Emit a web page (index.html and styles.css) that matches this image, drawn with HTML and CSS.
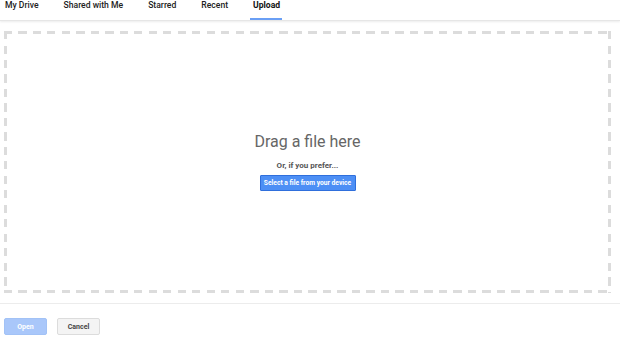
FILE: index.html
```html
<!DOCTYPE html>
<html>
<head>
<meta charset="utf-8">
<link rel="stylesheet" href="styles.css">
</head>
<body>
<div class="tabs">
  <div class="tab">My Drive</div>
  <div class="tab">Shared with Me</div>
  <div class="tab">Starred</div>
  <div class="tab">Recent</div>
  <div class="tab active">Upload</div>
</div>
<div class="main">
  <div class="drop">
    <div class="drag">Drag a file here</div>
    <div class="prefer">Or, if you prefer...</div>
    <button class="select">Select a file from your device</button>
  </div>
</div>
<div class="footer">
  <button class="btn open">Open</button>
  <button class="btn cancel">Cancel</button>
</div>
</body>
</html>
```
FILE: styles.css
```css
html, body {
  margin: 0;
  padding: 0;
  background: #fff;
  font-family: Roboto, "Liberation Sans", Arial, sans-serif;
  width: 620px;
  height: 340px;
  overflow: hidden;
}
.tabs {
  display: flex;
  gap: 20px;
  padding-left: 2px;
  height: 20px;
  border-bottom: 1px solid #e6e6e6;
  box-shadow: 0 1px 2px rgba(0,0,0,0.08);
}
.tab {
  padding: 0 2px 0 3px;
  font-size: 8.6px;
  line-height: 10px;
  color: #222;
  font-weight: 500;
  height: 18px;
  box-sizing: border-box;
}
.tab.active {
  font-weight: 700;
  color: #111;
  border-bottom: 2px solid #6a9ff5;
  height: 20px;
}
.main {
  padding: 10px 9px 10px 4px;
  border-bottom: 1px solid #ececec;
}
.drop {
  height: 262px;
  box-sizing: border-box;
  display: flex;
  flex-direction: column;
  align-items: center;
  justify-content: center;
  background:
    repeating-linear-gradient(90deg, #dcdcdc 0 8px, transparent 8px 14.5px) left top / 100% 3px no-repeat,
    repeating-linear-gradient(90deg, #dcdcdc 0 8px, transparent 8px 14.5px) left bottom / 100% 3px no-repeat,
    repeating-linear-gradient(180deg, #dcdcdc 0 8px, transparent 8px 14.5px) left top / 3px 100% no-repeat,
    repeating-linear-gradient(180deg, #dcdcdc 0 8px, transparent 8px 14.5px) right top / 3px 100% no-repeat;
}
.drag {
  font-size: 16px;
  color: #666;
  line-height: 18px;
}
.prefer {
  margin-top: 10px;
  font-size: 8px;
  font-weight: 700;
  color: #555;
  line-height: 10px;
}
.select {
  margin-top: 4px;
  height: 16px;
  width: 96px;
  padding: 0;
  white-space: nowrap;
  background: #4d8ff5;
  border: 1px solid #2f6fdc;
  color: #fff;
  font-family: Roboto, "Liberation Sans", Arial, sans-serif;
  font-size: 6.7px;
  font-weight: 700;
  border-radius: 1px;
}
.footer {
  display: flex;
  gap: 10px;
  padding: 14px 0 0 4px;
}
.btn {
  width: 43px;
  height: 17px;
  padding: 0;
  font-family: Roboto, "Liberation Sans", Arial, sans-serif;
  font-size: 7px;
  font-weight: 700;
  border-radius: 2px;
}
.open {
  background: #a9c7fa;
  border: 1px solid #a2c2f6;
  color: #fff;
}
.cancel {
  background: #f4f4f4;
  border: 1px solid #dcdcdc;
  color: #444;
}
```
